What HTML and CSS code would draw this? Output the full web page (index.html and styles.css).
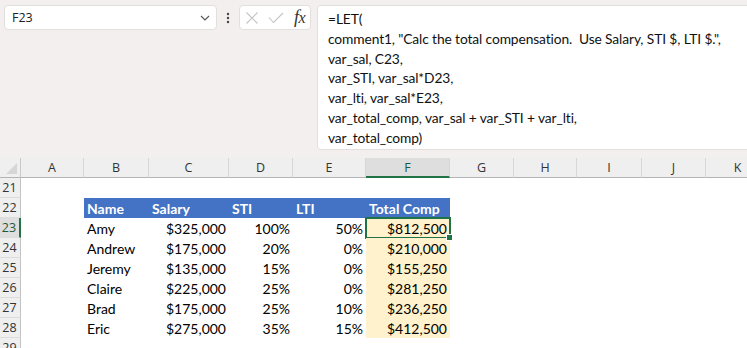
FILE: index.html
```html
<!DOCTYPE html>
<html>
<head>
<meta charset="utf-8">
<link rel="stylesheet" href="styles.css">
</head>
<body>
<div class="topbar">
  <div class="namebox">
    <span class="nb-text">F23</span>
    <svg class="chev" width="10" height="6" viewBox="0 0 10 6"><path d="M1 1 L5 5 L9 1" fill="none" stroke="#555" stroke-width="1.1"/></svg>
  </div>
  <div class="dots">
    <svg width="4" height="12" viewBox="0 0 4 12"><circle cx="2" cy="2" r="1.2" fill="#444"/><circle cx="2" cy="6" r="1.2" fill="#444"/><circle cx="2" cy="10" r="1.2" fill="#444"/></svg>
  </div>
  <div class="fxbox">
    <svg class="ic" width="14" height="14" viewBox="0 0 14 14"><path d="M1.5 1.5 L12.5 12.5 M12.5 1.5 L1.5 12.5" stroke="#c4c4c4" stroke-width="1.1" fill="none"/></svg>
    <svg class="ic" width="16" height="14" viewBox="0 0 16 14"><path d="M1 6.5 L5.5 11.5 L15 2" stroke="#c4c4c4" stroke-width="1.1" fill="none"/></svg>
    <span class="fx">f<span class="fxx">x</span></span>
  </div>
  <div class="formula">
    <div class="fl">=LET(</div>
    <div class="fl">comment1, "Calc the total compensation.  Use Salary, STI $, LTI $.",</div>
    <div class="fl">var_sal, C23,</div>
    <div class="fl">var_STI, var_sal*D23,</div>
    <div class="fl">var_lti, var_sal*E23,</div>
    <div class="fl">var_total_comp, var_sal + var_STI + var_lti,</div>
    <div class="fl">var_total_comp)</div>
  </div>
</div>

<div class="sheet">
  <div class="ch corner"><span class="tri"></span></div>
  <div class="ch">A</div>
  <div class="ch">B</div>
  <div class="ch">C</div>
  <div class="ch">D</div>
  <div class="ch">E</div>
  <div class="ch sel">F</div>
  <div class="ch">G</div>
  <div class="ch">H</div>
  <div class="ch">I</div>
  <div class="ch">J</div>
  <div class="ch">K</div>

  <div class="rh">21</div>
  <div class="c"></div><div class="c"></div><div class="c"></div><div class="c"></div><div class="c"></div><div class="c"></div><div class="c"></div><div class="c"></div><div class="c"></div><div class="c"></div><div class="c"></div>

  <div class="rh">22</div>
  <div class="c"></div>
  <div class="c hd">Name</div>
  <div class="c hd">Salary</div>
  <div class="c hd">STI</div>
  <div class="c hd">LTI</div>
  <div class="c hd">Total Comp</div>
  <div class="c"></div><div class="c"></div><div class="c"></div><div class="c"></div><div class="c"></div>

  <div class="rh rsel">23</div>
  <div class="c"></div>
  <div class="c">Amy</div>
  <div class="c r">$325,000</div>
  <div class="c r">100%</div>
  <div class="c r">50%</div>
  <div class="c r tot active">$812,500<span class="handle"></span></div>
  <div class="c"></div><div class="c"></div><div class="c"></div><div class="c"></div><div class="c"></div>

  <div class="rh">24</div>
  <div class="c"></div>
  <div class="c">Andrew</div>
  <div class="c r">$175,000</div>
  <div class="c r">20%</div>
  <div class="c r">0%</div>
  <div class="c r tot">$210,000</div>
  <div class="c"></div><div class="c"></div><div class="c"></div><div class="c"></div><div class="c"></div>

  <div class="rh">25</div>
  <div class="c"></div>
  <div class="c">Jeremy</div>
  <div class="c r">$135,000</div>
  <div class="c r">15%</div>
  <div class="c r">0%</div>
  <div class="c r tot">$155,250</div>
  <div class="c"></div><div class="c"></div><div class="c"></div><div class="c"></div><div class="c"></div>

  <div class="rh">26</div>
  <div class="c"></div>
  <div class="c">Claire</div>
  <div class="c r">$225,000</div>
  <div class="c r">25%</div>
  <div class="c r">0%</div>
  <div class="c r tot">$281,250</div>
  <div class="c"></div><div class="c"></div><div class="c"></div><div class="c"></div><div class="c"></div>

  <div class="rh">27</div>
  <div class="c"></div>
  <div class="c">Brad</div>
  <div class="c r">$175,000</div>
  <div class="c r">25%</div>
  <div class="c r">10%</div>
  <div class="c r tot">$236,250</div>
  <div class="c"></div><div class="c"></div><div class="c"></div><div class="c"></div><div class="c"></div>

  <div class="rh">28</div>
  <div class="c"></div>
  <div class="c">Eric</div>
  <div class="c r">$275,000</div>
  <div class="c r">35%</div>
  <div class="c r">15%</div>
  <div class="c r tot">$412,500</div>
  <div class="c"></div><div class="c"></div><div class="c"></div><div class="c"></div><div class="c"></div>

  <div class="rh">29</div>
  <div class="c"></div><div class="c"></div><div class="c"></div><div class="c"></div><div class="c"></div><div class="c"></div><div class="c"></div><div class="c"></div><div class="c"></div><div class="c"></div><div class="c"></div>
</div>
</body>
</html>
```

FILE: styles.css
```css
html, body {
  margin: 0;
  padding: 0;
}
body {
  width: 747px;
  height: 348px;
  overflow: hidden;
  background: #f3efee;
  font-family: Lato, "Liberation Sans", sans-serif;
}
.topbar {
  display: flex;
  align-items: flex-start;
  padding: 5px 0 0 4px;
  height: 145px;
}
.topbar > * { flex: none; }
.namebox {
  box-sizing: border-box;
  width: 213px;
  height: 25px;
  background: #fff;
  border: 1px solid #e3dfde;
  border-radius: 4px;
  display: flex;
  align-items: center;
  justify-content: space-between;
  padding: 0 6px 0 7px;
}
.nb-text {
  font-family: "Open Sans", "Noto Sans", sans-serif;
  font-size: 12.5px;
  color: #222;
}
.chev { margin-top: 1px; }
.dots {
  width: 22px;
  height: 25px;
  display: flex;
  align-items: center;
  justify-content: center;
}
.fxbox {
  box-sizing: border-box;
  width: 72px;
  height: 25px;
  background: #fff;
  border: 1px solid #e3dfde;
  border-radius: 4px;
  display: flex;
  align-items: center;
  padding: 0 0 0 5px;
  gap: 9px;
}
.fx {
  font-family: "Liberation Serif", "DejaVu Serif", serif;
  font-style: italic;
  font-size: 18px;
  color: #333;
  margin-left: 1px;
  letter-spacing: -0.5px;
}
.fxx { font-size: 16px; }
.formula {
  box-sizing: border-box;
  margin-left: 6px;
  width: 450px;
  height: 145px;
  background: #fff;
  border: 1px solid #e3dfde;
  border-radius: 4px;
  padding: 3px 0 0 10px;
}
.fl {
  font-size: 13.8px;
  letter-spacing: -0.12px;
  line-height: 19.8px;
  color: #111;
  white-space: pre;
}
.sheet {
  margin-top: 8px;
  display: grid;
  grid-template-columns: 21px 63px 65px 80px 64px 73px 84px 64px 63px 65px 64px 64px;
  grid-template-rows: 20px repeat(9, 20px);
  background: #fff;
}
.ch {
  box-sizing: border-box;
  background: #efefef;
  border-bottom: 1px solid #b4b4b4;
  border-right: 1px solid #d7d7d7;
  font-family: "Open Sans", "Noto Sans", sans-serif;
  font-size: 12.5px;
  color: #333;
  display: flex;
  align-items: center;
  justify-content: center;
  padding-bottom: 1px;
}
.ch.sel {
  background: #dedede;
  border-bottom: 2px solid #217346;
  color: #1e5a3a;
  padding-bottom: 0;
}
.corner {
  position: relative;
  border-right: 1px solid #c9c9c9;
}
.tri {
  position: absolute;
  right: 3px;
  bottom: 3px;
  width: 0;
  height: 0;
  border-left: 11px solid transparent;
  border-bottom: 11px solid #d6d6d6;
}
.rh {
  box-sizing: border-box;
  background: #efefef;
  border-right: 1px solid #c3c3c3;
  border-bottom: 1px solid #dcdcdc;
  font-family: "Open Sans", "Noto Sans", sans-serif;
  font-size: 12.5px;
  color: #333;
  display: flex;
  align-items: center;
  justify-content: center;
  padding-right: 1px;
}
.rh.rsel {
  background: #dedede;
  border-right: 2px solid #217346;
  color: #1e5a3a;
}
.c {
  box-sizing: border-box;
  font-size: 14px;
  color: #000;
  display: flex;
  align-items: center;
  padding: 1px 3px 0 3px;
  white-space: nowrap;
  position: relative;
}
.c.r { justify-content: flex-end; }
.c.hd {
  background: #4472c4;
  color: #fff;
  font-weight: 700;
}
.c.tot { background: #fff2cc; }
.c.active::after {
  content: "";
  position: absolute;
  left: -1px;
  top: -1px;
  right: -1px;
  bottom: -1px;
  border: 2px solid #217346;
}
.handle {
  position: absolute;
  right: -3px;
  bottom: -3px;
  width: 5px;
  height: 5px;
  background: #217346;
  border: 1px solid #fff;
  z-index: 2;
}
```
